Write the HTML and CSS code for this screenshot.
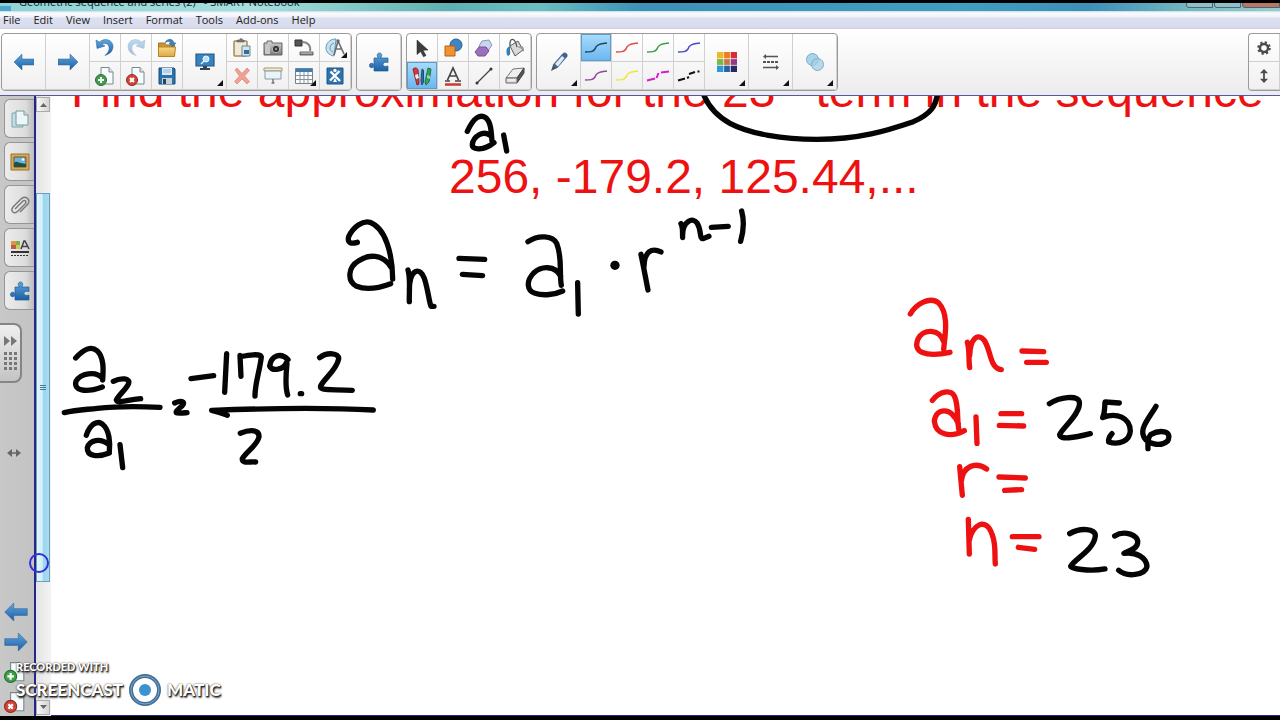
FILE: index.html
```html
<!DOCTYPE html>
<html lang="en">
<head>
<meta charset="utf-8">
<title>SMART Notebook</title>
<link rel="stylesheet" href="styles.css">
</head>
<body>
<svg class="defs" aria-hidden="true">
  <defs>
    <linearGradient id="blue" x1="0" y1="0" x2="0" y2="1"><stop offset="0" stop-color="#5fa6dc"/><stop offset="1" stop-color="#1c5fa6"/></linearGradient>
    <linearGradient id="folder" x1="0" y1="0" x2="0" y2="1"><stop offset="0" stop-color="#f7d98a"/><stop offset="1" stop-color="#dfa83c"/></linearGradient>
    <linearGradient id="metal" x1="0" y1="0" x2="0" y2="1"><stop offset="0" stop-color="#d8d8d8"/><stop offset="1" stop-color="#777"/></linearGradient>
    <symbol id="arrow-left" viewBox="0 0 20 16"><path d="M0 8 8 0v5H20v6H8v5z" fill="url(#blue)" stroke="#2a6199" stroke-width=".5"/></symbol>
    <symbol id="arrow-right" viewBox="0 0 20 16"><path d="M20 8 12 0v5H0v6h12v5z" fill="url(#blue)" stroke="#2a6199" stroke-width=".5"/></symbol>
    <symbol id="undo" viewBox="0 0 20 20"><path d="M1 2l1 8.500 8-2.500-3-1.500c4-2.500 8 .5 7 5-.5 2.500-2 4-4 6 5-1.500 8-4.500 8-9 0-6.500-8-9.500-13.500-4.500z" fill="url(#blue)" stroke="#2a6199" stroke-width=".5"/></symbol>
    <symbol id="page" viewBox="0 0 20 20"><path d="M6 1.500h8l4 4.500v12H6z" fill="#f8fbfb" stroke="#79888c"/><path d="M14 1.500V6h4" fill="#dfe8e9" stroke="#79888c"/></symbol>
    <symbol id="page-add" viewBox="0 0 20 20"><use href="#page"/><circle cx="6" cy="14" r="5.500" fill="#3f9f4a" stroke="#22722f"/><path d="M6 11v6M3 14h6" stroke="#fff" stroke-width="2"/></symbol>
    <symbol id="page-del" viewBox="0 0 20 20"><use href="#page"/><circle cx="6" cy="14" r="5.500" fill="#d0453a" stroke="#94281f"/><path d="M4 12l4 4M8 12l-4 4" stroke="#fff" stroke-width="2"/></symbol>
    <symbol id="open" viewBox="0 0 20 20"><path d="M1.500 5h6l2 2h8v11h-16z" fill="#c99735" stroke="#a27420"/><path d="M1.500 9h17l-1 9.500h-16z" fill="url(#folder)" stroke="#b8842b"/><path d="M8 5c2-5 8-5 9 0h2l-3.500 4L12 5h2c-1-2-4-2-6 0z" fill="#3d82ba" stroke="#28618f" stroke-width=".5"/></symbol>
    <symbol id="save" viewBox="0 0 20 20"><path d="M2 2h15l1 1v15H2z" fill="#2872ad" stroke="#184b7b"/><path d="M5 2h10v7H5z" fill="#dceaf5"/><path d="M6 4h8M6 6h8" stroke="#8fb6d6"/><path d="M5 12h10v6H5z" fill="#c7d1d8"/><path d="M6 13h3v5H6z" fill="#234460"/></symbol>
    <symbol id="screen" viewBox="0 0 20 18"><path d="M1 1h18v12H1z" fill="#3484c4" stroke="#2d5579" stroke-width="1.200"/><path d="M8 13h4v2h3v2H5v-2h3z" fill="#39444e"/><circle cx="11" cy="6" r="3" fill="#bfe0f4" stroke="#eef8ff"/><path d="M9 8l-3 3" stroke="#e8f4fc" stroke-width="1.500"/></symbol>
    <symbol id="paste" viewBox="0 0 20 20"><rect x="2" y="3" width="13" height="15" rx="1" fill="#efe9d8" stroke="#a78857" stroke-width="1.500"/><path d="M5 4V2h2.500L8 .8h2L10.500 2H12v2z" fill="#777" stroke="#555" stroke-width=".5"/><path d="M10 8h8v10h-8z" fill="#d2e4ee" stroke="#6d8797"/><path d="M12 12h5v4h-5z" fill="#2f6d9c"/></symbol>
    <symbol id="camera" viewBox="0 0 20 20"><path d="M1 5h3V3h5v2h10v12H1z" fill="url(#metal)" stroke="#656565"/><path d="M2 7h5v9H2z" fill="#c7c7c7"/><circle cx="13" cy="11" r="3.700" fill="#333" stroke="#bbb"/><circle cx="13" cy="11" r="1.200" fill="#999"/></symbol>
    <symbol id="doccam" viewBox="0 0 20 20"><path d="M1 2h7v6H1z" fill="#555" stroke="#333"/><path d="M8 4c6 0 9 4 8 9" fill="none" stroke="#858585" stroke-width="2"/><path d="M6 14h13v3H6z" fill="url(#metal)" stroke="#444" stroke-width=".8"/></symbol>
    <symbol id="measure" viewBox="0 0 20 20"><path d="M11 1C4 1 1 6 1 10s3 7 8 8z" fill="#c9e2ee" stroke="#5b99b8"/><path d="M9 5c-3 1-4 3-4 5s1 3 3 4" fill="none" stroke="#5b99b8"/><path d="M13 3 9 17M13 3l6 13M11 11h6" fill="none" stroke="#68717a" stroke-width="1.700"/><circle cx="13" cy="3" r="1.700" fill="#666"/></symbol>
    <symbol id="cross" viewBox="0 0 20 20"><path d="M3 4l2-2 5 5.500L15 2l2.500 2.500L12.500 10l5 5.500L15 18l-5-5-5 5-2.500-2.500 5-5.500z" fill="#efa095" stroke="#dd8176" stroke-width=".7"/></symbol>
    <symbol id="shade" viewBox="0 0 20 20"><path d="M1 2h18v3H1z" fill="#f5edce" stroke="#aa9772"/><path d="M2 5h16v8H2z" fill="#eaf3f8" stroke="#8b9aa0"/><path d="M10 13v4M8.500 17h3" stroke="#777" stroke-width="1.500"/></symbol>
    <symbol id="table" viewBox="0 0 20 20"><path d="M1.500 2.500h17v15h-17z" fill="#fff" stroke="#71828d"/><path d="M2 3h16v3H2z" fill="#3a7eb4"/><path d="M2 9.500h16M2 13.500h16M6 6v11M10 6v11M14 6v11" stroke="#8496a1"/></symbol>
    <symbol id="extras" viewBox="0 0 20 20"><path d="M2 2h16v16H2z" fill="#2d73ad" stroke="#1e5484"/><path d="M5 14.500 14.500 5M5.500 5.500 15 15" stroke="#fff" stroke-width="2.400"/><circle cx="10" cy="4.500" r="1.700" fill="#fff"/><path d="M10 12l2 4H8z" fill="#fff"/></symbol>
    <symbol id="puzzle" viewBox="0 0 20 20"><path d="M5 6h4.500c-2-2-1.500-5 1-5s3 3 1 5H19v4.500c-3-1-5 .5-5 2s2 2.500 5 1.500V19H5v-4.500c-2 2-4.500 1.500-4.500-1s2.500-3 4.500-1z" fill="url(#blue)" stroke="#225b94" stroke-width=".7"/></symbol>
    <symbol id="pointer" viewBox="0 0 20 20"><path d="M5 2l11 10-5 .3 3 5.200-2.500 1.300-2.800-5.300L5 16.500z" fill="#3d3d3d" stroke="#222" stroke-width=".5"/></symbol>
    <symbol id="shapes" viewBox="0 0 20 20"><circle cx="13" cy="7" r="6" fill="#3d85c4" stroke="#265f94"/><path d="M2 8h10v10H2z" fill="#f09332" stroke="#b85f12"/></symbol>
    <symbol id="polygons" viewBox="0 0 20 20"><path d="M8 3l7-1 3 5-4 6-7 0-2-5z" fill="#cad4ee" stroke="#8996be"/><path d="M5 9h7l3 4-4 5H4l-3-4z" fill="#9a70bc" stroke="#775294"/></symbol>
    <symbol id="fill" viewBox="0 0 20 20"><path d="M5 8l8-5 5 9-8 6z" fill="#d7d9da" stroke="#5b5b5b"/><path d="M5 8c-1-9 5-9 7 1" fill="none" stroke="#555" stroke-width="1.300"/><path d="M12 9l5-1c2 1 2 3 2 6l-2-3z" fill="#999"/><path d="M5 8c-4 2-4 5-3 9 2 2 4-1 3-4z" fill="#347eb0"/></symbol>
    <symbol id="pens" viewBox="0 0 20 20"><path d="M1 3c3-2 4-1 5 1l1 14-2 1z" fill="#d43b3b" stroke="#922"/><path d="M3 9l3-1 1 4-3 1z" fill="#eee"/><path d="M10 3l1.500 1v12L10 19l-1-4z" fill="#386f9a" stroke="#244e70"/><path d="M16 2l3 1-2 13-3 3-1-3z" fill="#36a15e" stroke="#227443"/><path d="M15 9l3 1v3l-3-1z" fill="#9ad4ac"/></symbol>
    <symbol id="text" viewBox="0 0 20 20"><path d="M2 15h5M12 15h6M4.500 14 10 2l5.500 12M7 10h6" fill="none" stroke="#444" stroke-width="1.700"/><path d="M2 18.500h16" stroke="#d13434" stroke-width="2.400"/></symbol>
    <symbol id="line" viewBox="0 0 20 20"><path d="M3 17 17 3" stroke="#444" stroke-width="1.300"/><circle cx="3" cy="17" r="1.500" fill="#333"/><circle cx="17" cy="3" r="1.500" fill="#333"/></symbol>
    <symbol id="eraser" viewBox="0 0 20 20"><path d="M1 12 8 3l11-1-7 10z" fill="#eee" stroke="#777"/><path d="M12 12 19 2v5l-7 10z" fill="#555" stroke="#444"/><path d="M1 12h11v5H1z" fill="#ddd" stroke="#666"/><path d="M3 14h7" stroke="#fff"/></symbol>
    <symbol id="pen" viewBox="0 0 20 20"><path d="M4 13 14 1.500c2-1.500 5 0 4 3L8 16z" fill="#3f6499" stroke="#294f7b" stroke-width=".6"/><path d="M6 12l7-8 2.500 2-6.500 8.500z" fill="#e3ebf2"/><path d="M4 13l4 3-6 3z" fill="#4a5360"/></symbol>
    <symbol id="stroke" viewBox="0 0 24 12"><path d="M1 10c5 0 8 0 10-3 1-5 6-5 12-6" fill="none" stroke="currentColor" stroke-width="1.500"/></symbol>
    <symbol id="stroke-dash" viewBox="0 0 24 12"><path d="M1 10.500l8-2M10.500 8l2-5M15 2.500l8-1" fill="none" stroke="currentColor" stroke-width="2"/></symbol>
    <symbol id="stroke-dot" viewBox="0 0 24 12"><path d="M1 10.500l7-2M10 8l2-1M12 4l6-2M20.500 1.500h2" fill="none" stroke="currentColor" stroke-width="2"/></symbol>
    <symbol id="palette" viewBox="0 0 18 18"><path d="M0 0h6v6H0z" fill="#edba24"/><path d="M6 0h6v6H6z" fill="#ee7d22"/><path d="M12 0h6v6h-6z" fill="#d82c35"/><path d="M0 6h6v6H0z" fill="#78b943"/><path d="M6 6h6v6H6z" fill="#c47942"/><path d="M12 6h6v6h-6z" fill="#96378a"/><path d="M0 12h6v6H0z" fill="#2b9bd5"/><path d="M6 12h6v6H6z" fill="#2463a5"/><path d="M12 12h6v6h-6z" fill="#2c2862"/><path d="M6 0v18M12 0v18M0 6h18M0 12h18" stroke="#f4f0ea" stroke-width=".7"/></symbol>
    <symbol id="line-style" viewBox="0 0 20 18"><path d="M4 3.500h13M2 14.500h13" stroke="#555" stroke-width="1.500"/><path d="M2 9h16" stroke="#555" stroke-width="2" stroke-dasharray="3 1"/><path d="M2 3.500 5 1v5zM18 14.500 15 12v5z" fill="#555"/></symbol>
    <symbol id="opacity" viewBox="0 0 20 20"><circle cx="7.500" cy="7.500" r="6" fill="#a9d3e8" stroke="#79aec8"/><circle cx="12.500" cy="12.500" r="6" fill="#a5cde4" fill-opacity=".75" stroke="#79aec8"/></symbol>
    <symbol id="gear" viewBox="0 0 20 20"><circle cx="10" cy="10" r="5" fill="none" stroke="#4b4b4b" stroke-width="3"/><circle cx="10" cy="10" r="7" fill="none" stroke="#4b4b4b" stroke-width="3" stroke-dasharray="2.750 2.750"/></symbol>
    <symbol id="updown" viewBox="0 0 12 18"><path d="M6 3v12" stroke="#4b4b4b" stroke-width="2"/><path d="M6 1l4.500 5h-9zM6 17l4.500-5h-9z" fill="#4b4b4b"/></symbol>
    <symbol id="leftright" viewBox="0 0 14 10"><path d="M3 5h8" stroke="#666" stroke-width="1.500"/><path d="M0 5l5-4v8zM14 5 9 1v8z" fill="#666"/></symbol>
    <symbol id="sorter" viewBox="0 0 20 20"><path d="M2 4h11v14H2z" fill="#c2dde3" stroke="#7ea5ad"/><path d="M6 2h8l4 4v10H6z" fill="#edf7f9" stroke="#7998a0"/><path d="M14 2v4h4" fill="#d4e7eb" stroke="#7998a0"/></symbol>
    <symbol id="gallery" viewBox="0 0 20 18"><path d="M1 1h18v16H1z" fill="#d7aa58" stroke="#98712f"/><path d="M4 4h12v10H4z" fill="#6cb5da" stroke="#725524"/><path d="M4 10c3-3 5 0 7 0l5 1v3H4z" fill="#1d5145"/><circle cx="13" cy="6.500" r="1.300" fill="#fff"/></symbol>
    <symbol id="clip" viewBox="0 0 20 20"><path d="M5 14l8-8c2-2 4 1 2 3l-7 7c-4 4-8 0-5-4l8-8c4-4 10 0 7 5l-8 8" fill="none" stroke="#777" stroke-width="1.400"/></symbol>
    <symbol id="properties" viewBox="0 0 20 18"><path d="M1 2h5v4H1z" fill="#d99841"/><path d="M6 2h4v4H6z" fill="#7cac55"/><path d="M1 6h5v4H1z" fill="#bd5b4e"/><path d="M6 6h4v4H6z" fill="#d8c848"/><path d="M11 10l3-8h1l4 8M12 7.500h5" fill="none" stroke="#444" stroke-width="1.600"/><path d="M1 13h18" stroke="#333" stroke-width="2"/><path d="M1 16.500h18" stroke="#333" stroke-dasharray="2 1"/></symbol>
  </defs>
</svg>

<div class="app">
  <header class="titlebar"><span class="app-icon"></span><span>Geometric sequence and series (2)</span><span>- SMART Notebook</span><span class="window-buttons"><i></i><i></i><i></i></span></header>
  <nav class="menu" aria-label="Menu">
    <button>File</button><button>Edit</button><button>View</button><button>Insert</button><button>Format</button><button>Tools</button><button>Add-ons</button><button>Help</button>
  </nav>
  <div class="toolbar" role="toolbar" aria-label="Notebook tools">
    <div class="group">
      <button class="big" aria-label="Previous page"><svg class="icon"><use href="#arrow-left"/></svg></button>
      <button class="big" aria-label="Next page"><svg class="icon"><use href="#arrow-right"/></svg></button>
      <button aria-label="Undo"><svg class="icon"><use href="#undo"/></svg></button>
      <button aria-label="Add page"><svg class="icon"><use href="#page-add"/></svg></button>
      <button aria-label="Redo"><svg class="icon faded flip"><use href="#undo"/></svg></button>
      <button aria-label="Delete page"><svg class="icon"><use href="#page-del"/></svg></button>
      <button aria-label="Open"><svg class="icon"><use href="#open"/></svg></button>
      <button aria-label="Save"><svg class="icon"><use href="#save"/></svg></button>
      <button class="big more" aria-label="View screens"><svg class="icon"><use href="#screen"/></svg></button>
      <button aria-label="Paste"><svg class="icon"><use href="#paste"/></svg></button>
      <button aria-label="Delete"><svg class="icon"><use href="#cross"/></svg></button>
      <button aria-label="Screen capture"><svg class="icon"><use href="#camera"/></svg></button>
      <button aria-label="Screen shade"><svg class="icon"><use href="#shade"/></svg></button>
      <button aria-label="Document camera"><svg class="icon"><use href="#doccam"/></svg></button>
      <button class="more" aria-label="Table"><svg class="icon"><use href="#table"/></svg></button>
      <button class="more" aria-label="Measurement tools"><svg class="icon"><use href="#measure"/></svg></button>
      <button aria-label="SMART Exchange"><svg class="icon"><use href="#extras"/></svg></button>
    </div>
    <div class="group">
      <button class="big" aria-label="Add-ons"><svg class="icon"><use href="#puzzle"/></svg></button>
    </div>
    <div class="group">
      <button aria-label="Select"><svg class="icon"><use href="#pointer"/></svg></button>
      <button class="active" aria-label="Pens"><svg class="icon"><use href="#pens"/></svg></button>
      <button aria-label="Shapes"><svg class="icon"><use href="#shapes"/></svg></button>
      <button aria-label="Text"><svg class="icon"><use href="#text"/></svg></button>
      <button aria-label="Regular polygons"><svg class="icon"><use href="#polygons"/></svg></button>
      <button aria-label="Lines"><svg class="icon"><use href="#line"/></svg></button>
      <button aria-label="Fill"><svg class="icon"><use href="#fill"/></svg></button>
      <button aria-label="Eraser"><svg class="icon"><use href="#eraser"/></svg></button>
    </div>
    <div class="group">
      <button class="big more" aria-label="Pen type"><svg class="icon"><use href="#pen"/></svg></button>
      <button class="active" aria-label="Black pen"><svg class="icon ink dark"><use href="#stroke"/></svg></button>
      <button aria-label="Purple pen"><svg class="icon ink purple"><use href="#stroke"/></svg></button>
      <button aria-label="Red pen"><svg class="icon ink red"><use href="#stroke"/></svg></button>
      <button aria-label="Yellow pen"><svg class="icon ink yellow"><use href="#stroke"/></svg></button>
      <button aria-label="Green pen"><svg class="icon ink green"><use href="#stroke"/></svg></button>
      <button aria-label="Magenta dashed pen"><svg class="icon ink magenta"><use href="#stroke-dash"/></svg></button>
      <button aria-label="Blue pen"><svg class="icon ink blue"><use href="#stroke"/></svg></button>
      <button aria-label="Black dashed pen"><svg class="icon ink black"><use href="#stroke-dot"/></svg></button>
      <button class="big more" aria-label="Color"><svg class="icon"><use href="#palette"/></svg></button>
      <button class="big more" aria-label="Line style"><svg class="icon"><use href="#line-style"/></svg></button>
      <button class="big more" aria-label="Transparency"><svg class="icon"><use href="#opacity"/></svg></button>
    </div>
    <div class="group last">
      <button aria-label="Settings"><svg class="icon small"><use href="#gear"/></svg></button>
      <button aria-label="Move toolbar"><svg class="icon small"><use href="#updown"/></svg></button>
    </div>
  </div>

  <div class="workspace">
    <aside class="sidebar">
      <div class="tabs">
        <button aria-label="Page sorter"><svg class="icon"><use href="#sorter"/></svg></button>
        <button aria-label="Gallery"><svg class="icon"><use href="#gallery"/></svg></button>
        <button aria-label="Attachments"><svg class="icon"><use href="#clip"/></svg></button>
        <button aria-label="Properties"><svg class="icon"><use href="#properties"/></svg></button>
        <button aria-label="Add-ons tab"><svg class="icon"><use href="#puzzle"/></svg></button>
      </div>
      <button class="handle" aria-label="Show tools"><svg width="16" height="36" viewBox="0 0 16 36"><path d="M2 1l6 5-6 5zM9 1l6 5-6 5z" fill="#777"/><path d="M2 18.500h13M2 23.500h13M2 28.500h13M2 33.500h13" stroke="#777" stroke-width="3" stroke-dasharray="3 2"/></svg></button>
      <button class="resize" aria-label="Resize sidebar"><svg width="14" height="10"><use href="#leftright"/></svg></button>
      <div class="page-nav">
        <button aria-label="Page back"><svg class="nav-arrow"><use href="#arrow-left"/></svg></button>
        <button aria-label="Page forward"><svg class="nav-arrow"><use href="#arrow-right"/></svg></button>
        <button aria-label="Insert page"><svg class="nav-page"><use href="#page-add"/></svg></button>
        <button aria-label="Remove page"><svg class="nav-page"><use href="#page-del"/></svg></button>
      </div>
    </aside>
    <div class="scrollbar">
      <button aria-label="Scroll up"><svg width="7" height="4"><path d="M0 4l3.500-4L7 4z" fill="#666"/></svg></button>
      <div class="track-above"></div>
      <div class="thumb"><i></i><i></i><i></i></div>
      <div class="track-below"></div>
      <button aria-label="Scroll down"><svg width="7" height="4"><path d="M0 0l3.500 4L7 0z" fill="#666"/></svg></button>
    </div>
    <main class="board">
      <h1>Find the approximation for the 23<sup>rd</sup> term in the sequence</h1>
      <p>256, -179.2, 125.44,...</p>
      <svg class="inkwork" role="img" aria-label="Handwritten formula for the nth term">
        <g transform="translate(589 -6) scale(.3333)"><path d="M186 0C200 45 225 75 270 100C330 132 430 148 530 148C660 148 740 122 820 95C870 73 892 48 893 0"/></g>
        <g transform="translate(279 -1) scale(.3333)">
          <path d="M412 109C432 65 452 57 467 68C482 80 484 107 486 138M482 122C460 103 430 125 427 148C425 167 462 167 492 143M521 120L530 168"/>
          <path d="M82 442C65 447 51 446 56 425C70 395 98 376 120 382C167 400 187 475 188 552M184 518C158 475 115 478 85 498C53 517 51 559 80 574C112 587 150 578 182 566M234 525C242 550 237 590 238 620M238 583C240 520 270 515 283 550C295 588 297 620 303 634L312 634"/>
          <path d="M387 490L464 493M397 538L458 542M594 440C625 419 668 421 680 445C698 490 687 530 694 571M692 543C675 510 633 513 611 534C588 558 590 587 615 595C640 603 675 599 698 588M743 563L745 657"/>
          <circle cx="855" cy="511" r="8" class="dot"/>
          <path d="M933 478C941 515 947 550 954 585M942 515C943 470 965 457 993 471M1053 386C1060 400 1057 415 1058 428M1058 420C1058 378 1089 365 1102 385C1116 408 1107 433 1120 431L1137 424M1144 397L1195 394M1235 348C1243 377 1240 412 1232 439"/>
        </g>
        <g transform="translate(-1 234) scale(.3333)">
          <path d="M77 84C100 58 124 47 141 62C163 83 160 120 158 150M158 145C137 121 91 130 78 154C70 181 105 190 157 171M190 154C214 142 241 145 236 160C231 176 209 191 199 210C201 220 223 211 272 206M43 248C80 239 107 239 142 235C205 228 270 229 330 232"/>
          <path d="M109 316C120 281 145 268 160 285C178 300 181 340 178 365M178 345C150 322 119 330 112 353C110 380 145 382 178 369M210 344L218 413M374 219C398 209 411 218 390 233C370 252 375 251 411 248"/>
          <path d="M423 146L491 137M530 71L524 187M570 76L573 139M571 80C593 76 632 69 634 81C630 120 615 158 615 198M714 89C692 66 664 77 659 108C667 125 701 120 710 97M711 101C707 140 705 170 713 195M751 191L755 191M809 83C832 65 868 69 866 87C860 120 823 145 812 168C807 184 847 177 907 181"/>
          <path d="M970 240C800 231 650 235 485 241C508 246 515 249 532 256M571 310C603 297 629 300 627 321C622 345 590 365 577 386C575 402 601 394 617 396"/>
        </g>
        <g transform="translate(839 184) scale(.3333)">
          <path class="red" d="M61 102C78 72 119 48 146 69C179 104 164 170 161 209M161 185C148 145 99 145 84 177C67 216 105 233 180 217M232 187C240 215 235 240 239 263M239 227C241 175 263 158 282 180C303 207 298 265 334 269M396 213L461 215M410 247L469 247"/>
          <path class="red" d="M127 361C149 333 183 327 194 350C207 380 200 420 207 451M205 431C184 380 139 382 133 423C137 464 180 475 223 452M258 411L261 490M333 401L395 401M328 436L401 438M209 560L217 646M214 604C219 558 256 544 290 567M327 591L406 594M344 631L395 629M235 718L238 822M238 781C245 738 288 706 307 765C319 797 313 825 316 852M367 770L447 770M385 802L434 808"/>
          <path d="M478 371C510 351 561 345 568 365C575 399 515 446 509 464C510 480 550 474 601 461M688 369L646 366C643 366 647 392 638 413C680 396 720 413 721 453C719 482 689 496 656 486C654 474 660 468 666 461M798 379C778 413 751 443 760 466C765 489 810 504 833 483C850 449 806 450 782 464C771 477 774 490 774 506"/>
          <path d="M539 761C570 742 618 745 616 768C612 810 554 837 542 859C544 865 595 876 645 867M674 768C703 749 747 765 743 789C739 812 710 812 702 820C738 815 770 832 771 860C765 886 711 893 686 871"/>
        </g>
      </svg>
    </main>
    <div class="cursor-ring"></div>
    <div class="watermark">
      <div class="recorded">RECORDED WITH</div>
      <div class="brand"><span>SCREENCAST</span><svg width="34" height="34" viewBox="0 0 34 34"><circle cx="17" cy="17" r="14" fill="#fff" stroke="#436f94" stroke-width="4"/><circle cx="17" cy="17" r="14" fill="none" stroke="#78a8cb"/><circle cx="17" cy="17" r="6" fill="#3c91cf"/></svg><span>MATIC</span></div>
    </div>
  </div>
</div>
</body>
</html>
```

FILE: styles.css
```css
* { box-sizing: border-box; }
body { margin: 0; background: #000; font-family: "Open Sans", "Noto Sans", sans-serif; }
button { margin: 0; padding: 0; border: 0; background: none; font: inherit; color: inherit; }
.defs { position: absolute; width: 0; height: 0; }
.app { display: flex; flex-direction: column; height: 100vh; padding: 3px 0 4px; overflow: hidden; }

.titlebar {
  display: flex; align-items: flex-end; flex: none; gap: 8px; height: 8px; overflow: hidden;
  background: linear-gradient(90deg, #8ed2d4, #a6dfdc 20%, #5eb0b2 35%, #6abfc0 42%, #3c92b8 50%, #3f9fc0 75%, #3c8fb8 85%, #74b8c0 93%, #9cc);
  font-size: 11px; line-height: 12px; color: #123; white-space: nowrap;
}
.titlebar span { padding-bottom: 3px; }
.titlebar .app-icon { width: 11px; height: 5px; background: #4aa5cf; }
.window-buttons { display: flex; gap: 1px; margin-left: auto; }
.window-buttons i { width: 27px; height: 14px; background: #8fc0c8; border: 1px solid #467; border-radius: 0 0 0 3px; }
.window-buttons i:last-child { width: 38px; background: #bd7563; }

.menu {
  display: flex; flex: none; align-items: center; gap: 13px; height: 18px; padding: 0 3px;
  background: linear-gradient(#c9dbe5, #fafbfe 2px, #eef1f9 6px, #dcdff0 7px, #dadded 16px, #c9cddd);
  font-size: 11px; line-height: 16px; color: #222;
}
.toolbar {
  display: flex; flex: none; gap: 4px; height: 67px; padding: 4px 0 4px 1px;
  background: linear-gradient(#fff, #ececec); border-bottom: 1px solid #5656a8;
}
.group {
  display: grid; grid-template-rows: 28px 28px; grid-auto-flow: column; grid-auto-columns: max-content;
  height: 58px; overflow: hidden; border: 1px solid #9a9a9a; border-radius: 4px;
  background: linear-gradient(#fff, #f0f0f0);
}
.group button { position: relative; display: grid; place-items: center; width: 31px; border-right: 1px solid #d0d0d0; border-bottom: 1px solid #d0d0d0; }
.group .big { grid-row: span 2; width: 44px; }
.group .active { background: linear-gradient(#a9dcfb, #69b5f2); box-shadow: inset 0 0 0 1px #5d9ccb; }
.group.last { margin-left: auto; border-right: 0; border-radius: 4px 0 0 4px; }
.more::after { content: ""; position: absolute; right: 3px; bottom: 3px; width: 0; height: 0; border: 3px solid; border-color: transparent #111 #111 transparent; }
.icon { width: 20px; height: 20px; }
.small { width: 16px; height: 16px; }
.faded { opacity: .4; }
.flip { transform: scaleX(-1); }
.ink { width: 24px; height: 12px; }
.dark { color: #24465c; } .purple { color: #93489b; } .red { color: #e04b4b; } .yellow { color: #ece83c; }
.green { color: #3fa046; } .magenta { color: #dc18d4; } .blue { color: #4848d0; } .black { color: #111; }

.workspace { position: relative; display: flex; flex: 1; min-height: 0; background: #fff; }
.sidebar { display: flex; flex: none; flex-direction: column; width: 36px; padding: 3px 0; background: linear-gradient(90deg, #c8c8c8, #c3c3c3); border-right: 2px solid #25258a; }
.tabs { display: flex; flex-direction: column; gap: 4px; padding-left: 4px; }
.tabs button { display: grid; place-items: center; height: 39px; border: 1px solid #959595; border-right: 0; border-radius: 6px 0 0 6px; background: linear-gradient(90deg, #ececec, #ddd 70%, #bcbcbc); }
.handle { display: grid; place-items: center; width: 22px; height: 60px; margin-top: 13px; border: 2px solid #858585; border-left: 0; border-radius: 0 8px 8px 0; background: linear-gradient(#efefef, #c4c4c4); }
.resize { display: grid; place-items: center; width: 28px; margin-top: 65px; }
.page-nav { display: flex; flex-direction: column; align-items: flex-start; gap: 8px; margin-top: auto; padding-left: 4px; }
.page-nav button { display: grid; height: 22px; place-items: center; }
.nav-arrow { width: 24px; height: 18px; }
.nav-page { width: 22px; height: 22px; }

.scrollbar { display: flex; flex: none; flex-direction: column; width: 15px; padding: 1px 1px 1px 0; background: linear-gradient(90deg, #e4e4e4, #f3f3f3); }
.scrollbar button { display: grid; flex: none; place-items: center; height: 15px; border: 1px solid #aaa; background: linear-gradient(90deg, #f8f8f8, #d4d4d4); }
.track-above { flex: 81; }
.thumb { display: flex; flex: 389; flex-direction: column; align-items: center; justify-content: center; gap: 1px; border: 1px solid #6a9fc0; background: linear-gradient(90deg, #e3f6fd 0, #cfeefa 45%, #9bd5f0 50%, #a7dcf2); }
.thumb i { width: 6px; height: 1px; background: #477b98; }
.track-below { flex: 118; }

.board { position: relative; flex: 1; min-width: 0; overflow: hidden; background: #fff; color: #ee1111; font-family: "Liberation Sans", Arial, sans-serif; font-size: 48px; line-height: 56px; white-space: nowrap; border-bottom: 1px solid #25258a; }
.board h1 { margin: -33px 0 0 20px; font-size: inherit; font-weight: 400; }
.board sup { font-size: 30px; line-height: 0; vertical-align: 20px; }
.board p { margin: 30px 0 0 398px; }
.inkwork { position: absolute; inset: 0; width: 100%; height: 100%; fill: none; stroke: #050505; stroke-width: 16; stroke-linecap: round; stroke-linejoin: round; }
.inkwork .red { stroke: #ee1111; }
.inkwork .dot { fill: #050505; stroke: none; r: 14px; }

.cursor-ring { position: absolute; left: 29px; top: 457px; width: 20px; height: 20px; border: 2px solid #3030d8; border-radius: 50%; }
.watermark { position: absolute; left: 16px; bottom: 9px; color: #fff; font-family: Lato, sans-serif; font-weight: 900; text-shadow: 1px 1px 1px #222, 0 0 2px #444, 1px 2px 2px #555; }
.recorded { font-size: 11px; line-height: 12px; }
.brand { display: flex; align-items: center; gap: 5px; font-size: 17px; line-height: 34px; }
```
